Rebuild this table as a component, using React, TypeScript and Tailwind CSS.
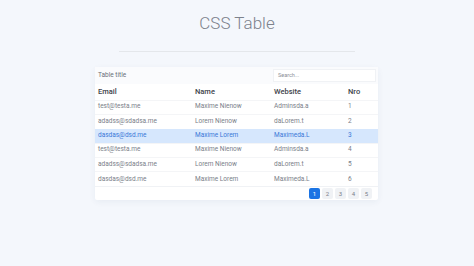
const rows = [
  { email: 'test@testa.me', name: 'Maxime Nienow', site: 'Adminsda.a', nro: 1 },
  { email: 'adadss@sdadsa.me', name: 'Lorem Nienow', site: 'daLorem.t', nro: 2 },
  { email: 'dasdas@dsd.me', name: 'Maxime Lorem', site: 'Maximeda.L', nro: 3, active: true },
  { email: 'test@testa.me', name: 'Maxime Nienow', site: 'Adminsda.a', nro: 4 },
  { email: 'adadss@sdadsa.me', name: 'Lorem Nienow', site: 'daLorem.t', nro: 5 },
  { email: 'dasdas@dsd.me', name: 'Maxime Lorem', site: 'Maximeda.L', nro: 6 },
];

export default function App() {
  return (
    <div
      className="h-[266px] w-[474px] overflow-hidden bg-[#f4f7fc] text-[#555b66]"
      style={{ fontFamily: 'Roboto, "Noto Sans", sans-serif' }}
    >
      <div className="flex flex-col items-center pt-[13px]">
        <h1 className="text-[17px] font-light leading-[20px] text-[#7d828c]">CSS Table</h1>
        <div className="mt-[18px] h-px w-[236px] bg-[#e4e7eb]" />
      </div>

      <div className="ml-[95px] mt-[15px] w-[283px] rounded-[2px] bg-white shadow-[0_2px_6px_rgba(40,60,100,0.06)]">
        <div className="flex h-[17px] items-center justify-between bg-[#fafbfd] pl-[3px] pr-[2px]">
          <span className="text-[6.5px] text-[#6a707a]">Table title</span>
          <div className="flex h-[13px] w-[103px] items-center border border-[#f0f2f5] bg-white px-[4px] text-[5.5px] text-[#8a8f97]">
            Search...
          </div>
        </div>

        <table className="w-full table-fixed border-collapse text-left">
          <thead>
            <tr className="h-[16px] text-[7.5px] text-[#3d424a]">
              <th className="w-[100px] pl-[3px] font-medium">Email</th>
              <th className="w-[79px] font-medium">Name</th>
              <th className="w-[74px] font-medium">Website</th>
              <th className="font-medium">Nro</th>
            </tr>
          </thead>
          <tbody>
            {rows.map((r, i) => (
              <tr
                key={i}
                className={
                  r.active
                    ? 'h-[14.4px] bg-[#d6e7fd] text-[6.5px] text-[#3a78d8]'
                    : 'h-[14.4px] border-t border-[#f4f5f7] text-[6.5px] text-[#7a8089]'
                }
              >
                <td className="pl-[3px]">{r.email}</td>
                <td>{r.name}</td>
                <td>{r.site}</td>
                <td>{r.nro}</td>
              </tr>
            ))}
          </tbody>
        </table>

        <div className="flex h-[14px] items-start justify-end gap-[2px] border-t border-[#f0f2f5] pr-[6px] pt-[1px]">
          {[1, 2, 3, 4, 5].map((n) => (
            <span
              key={n}
              className={
                n === 1
                  ? 'flex h-[11px] w-[11px] items-center justify-center rounded-[2px] bg-[#1b74e4] text-[6px] text-white'
                  : 'flex h-[11px] w-[11px] items-center justify-center rounded-[2px] bg-[#f0f2f5] text-[6px] text-[#7a808a]'
              }
            >
              {n}
            </span>
          ))}
        </div>
      </div>
    </div>
  );
}
